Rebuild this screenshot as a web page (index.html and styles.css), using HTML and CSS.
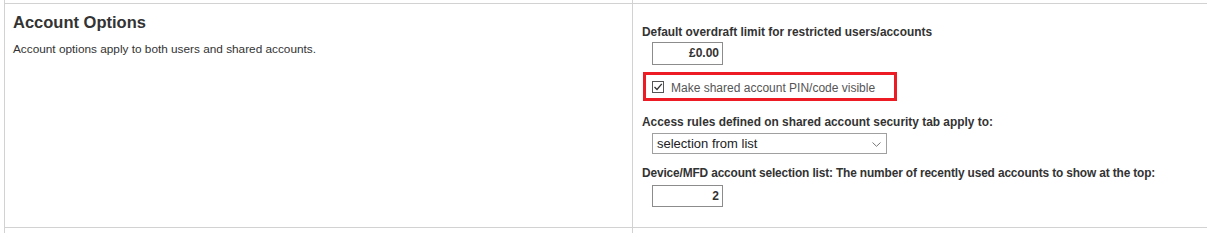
FILE: index.html
```html
<!DOCTYPE html>
<html>
<head>
<meta charset="utf-8">
<link rel="stylesheet" href="styles.css">
</head>
<body>
<div class="sheet">
  <div class="stub"><div class="col-l"></div><div class="col-r"></div></div>
  <div class="row">
    <div class="col-l cell-l">
      <h2 class="title">Account Options</h2>
      <p class="desc">Account options apply to both users and shared accounts.</p>
    </div>
    <div class="col-r cell-r">
      <div class="label l1">Default overdraft limit for restricted users/accounts</div>
      <div class="field f1">£0.00</div>
      <div class="highlight">
        <span class="check"><svg width="10" height="10" viewBox="0 0 10 10"><path d="M1.5 5 L4 7.5 L8.8 1.8" fill="none" stroke="#333" stroke-width="1.3"/></svg></span>
        <span class="check-text">Make shared account PIN/code visible</span>
      </div>
      <div class="label l2">Access rules defined on shared account security tab apply to:</div>
      <div class="select"><span class="select-text">selection from list</span><svg class="chev" width="9" height="5" viewBox="0 0 9 5"><path d="M0.5 0.5 L4.5 4.3 L8.5 0.5" fill="none" stroke="#777" stroke-width="1"/></svg></div>
      <div class="label l3">Device/MFD account selection list: The number of recently used accounts to show at the top:</div>
      <div class="field f2">2</div>
    </div>
  </div>
  <div class="stub stub-b"><div class="col-l"></div><div class="col-r"></div></div>
</div>
</body>
</html>
```
FILE: styles.css
```css
html, body {
  margin: 0;
  padding: 0;
  background: #fff;
}
body {
  font-family: "Liberation Sans", Arial, sans-serif;
  color: #333;
  width: 1208px;
  height: 233px;
  overflow: hidden;
}
.sheet {
  margin-left: 4px;
  width: 1202px;
  border-left: 1px solid #d2d2d2;
}
.stub, .row {
  display: grid;
  grid-template-columns: 627px 1fr;
}
.stub { height: 3px; }
.stub-b { height: 10px; }
.row {
  border-top: 1px solid #d2d2d2;
  border-bottom: 1px solid #d2d2d2;
  height: 223px;
}
.col-r { border-left: 1px solid #d2d2d2; }
.cell-l { padding: 8px 0 0 8px; }
.title {
  margin: 0;
  font-size: 16.5px;
  line-height: 20px;
  font-weight: bold;
  color: #333;
}
.desc {
  margin: 10px 0 0;
  font-size: 11.8px;
  line-height: 14px;
  color: #333;
}
.cell-r { padding: 21px 0 0 9px; }
.label {
  font-size: 11.9px;
  line-height: 14px;
  font-weight: bold;
  color: #333;
  white-space: nowrap;
}
.field {
  box-sizing: border-box;
  width: 71px;
  height: 23px;
  margin-left: 10px;
  border: 1px solid #8c8c8c;
  font-size: 12px;
  font-weight: bold;
  line-height: 21px;
  text-align: right;
  padding-right: 3px;
  color: #333;
}
.f1 { margin-top: 3px; }
.f2 { margin-top: 5px; height: 22px; line-height: 20px; }
.highlight {
  box-sizing: border-box;
  margin-top: 7px;
  margin-left: 1px;
  width: 254px;
  height: 29px;
  border: 3px solid #ed1c24;
  display: flex;
  align-items: center;
  padding-left: 6px;
}
.check {
  box-sizing: border-box;
  width: 12px;
  height: 12px;
  border: 1px solid #555;
  display: flex;
  align-items: center;
  justify-content: center;
  margin-top: 1px;
}
.check-text {
  margin-left: 7px;
  font-size: 12px;
  color: #555;
  line-height: 14px;
  margin-top: 2px;
}
.l2 { margin-top: 14px; }
.select {
  box-sizing: border-box;
  margin-top: 4px;
  margin-left: 10px;
  width: 235px;
  height: 21px;
  border: 1px solid #a0a0a0;
  display: flex;
  align-items: center;
  justify-content: space-between;
  padding: 0 5px 0 4px;
}
.select-text {
  font-size: 13px;
  color: #222;
  line-height: 16px;
}
.chev { margin-top: 1px; }
.l3 { margin-top: 12px; letter-spacing: -0.14px; }
```
